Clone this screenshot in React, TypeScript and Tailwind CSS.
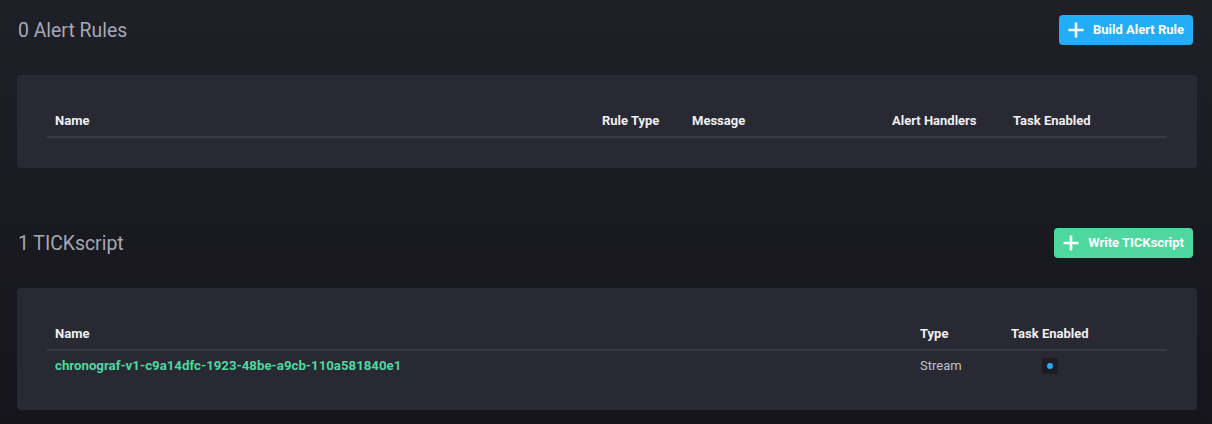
import React from "react";

function Plus() {
  return (
    <svg width="16" height="16" viewBox="0 0 16 16" className="shrink-0">
      <path d="M8 0.5V15.5M0.5 8H15.5" stroke="#ffffff" strokeWidth="2.6" fill="none" />
    </svg>
  );
}

function Header({ title, label, color }: { title: string; label: string; color: string }) {
  return (
    <div className="h-[60px] flex items-center justify-between pl-[1px] pr-[4px]">
      <h2 className="text-[19.4px] font-normal text-[#a4a8b6] leading-none pt-[2px]">{title}</h2>
      <button
        className={`h-[30px] flex items-center gap-[9px] rounded-[4px] pl-[9px] pr-[9px] text-[13px] font-bold text-white ${color}`}
      >
        <Plus />
        <span>{label}</span>
      </button>
    </div>
  );
}

export default function App() {
  return (
    <div
      className="w-[1212px] h-[424px] overflow-hidden bg-gradient-to-b from-[#1f1f27] to-[#15151b] pl-[17px] pr-[15px]"
      style={{ fontFamily: "Roboto, 'Liberation Sans', sans-serif" }}
    >
      <Header title="0 Alert Rules" label="Build Alert Rule" color="bg-[#22adf6]" />
      <div className="mt-[15px] bg-[#292933] rounded-[4px] p-[30px]">
        <div className="grid grid-cols-[547px_90px_200px_121px_1fr] h-[31px] items-center border-b-2 border-[#383846] text-[13px] font-bold text-[#eeeff2] box-content">
          <div className="px-[8px]">Name</div>
          <div className="px-[8px]">Rule Type</div>
          <div className="px-[8px]">Message</div>
          <div className="px-[8px]">Alert Handlers</div>
          <div className="px-[8px]">Task Enabled</div>
        </div>
      </div>

      <div className="mt-[45px]">
        <Header title="1 TICKscript" label="Write TICKscript" color="bg-[#4ed8a0]" />
      </div>
      <div className="mt-[15px] bg-[#292933] rounded-[4px] p-[30px]">
        <div className="grid grid-cols-[865px_91px_1fr] h-[31px] items-center border-b-2 border-[#383846] text-[13px] font-bold text-[#eeeff2] box-content">
          <div className="px-[8px]">Name</div>
          <div className="px-[8px]">Type</div>
          <div className="px-[8px]">Task Enabled</div>
        </div>
        <div className="grid grid-cols-[865px_91px_1fr] h-[29px] items-center text-[13px]">
          <div className="px-[8px] font-bold text-[13.25px] text-[#4ed8a0]">chronograf-v1-c9a14dfc-1923-48be-a9cb-110a581840e1</div>
          <div className="px-[8px] text-[#bec2cc]">Stream</div>
          <div className="px-[8px]">
            <div className="ml-[31px] w-[16px] h-[16px] rounded-[3px] bg-[#1c1c21] flex items-center justify-center">
              <div className="w-[6px] h-[6px] rounded-full bg-[#22adf6]" />
            </div>
          </div>
        </div>
      </div>
    </div>
  );
}
